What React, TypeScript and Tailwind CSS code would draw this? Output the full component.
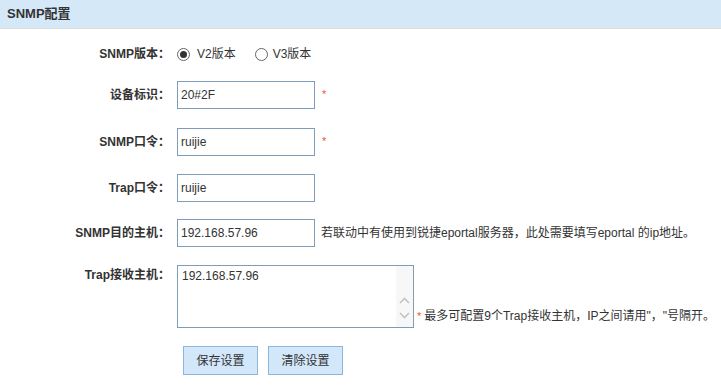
import React from "react";

const font = { fontFamily: '"Liberation Sans", Arial, "Noto Sans CJK SC", sans-serif' };

function Label({ children }: { children: React.ReactNode }) {
  return (
    <div className="w-[170px] shrink-0 text-right font-bold text-[12px] text-[#333]">{children}</div>
  );
}

function Input({ value }: { value: string }) {
  return (
    <div className="w-[138px] h-[28px] border border-[#7f9db9] bg-white flex items-center pl-[3px] text-[12px] text-[#333]">
      {value}
    </div>
  );
}

function Star() {
  return <span className="text-[#f5542d] text-[11px] leading-none">*</span>;
}

function Radio({ checked }: { checked: boolean }) {
  return (
    <span className="w-[13px] h-[13px] rounded-full border border-[#666] bg-white flex items-center justify-center">
      {checked && <span className="w-[7px] h-[7px] rounded-full bg-[#333]" />}
    </span>
  );
}

export default function App() {
  return (
    <div className="w-[721px] h-[389px] bg-white relative overflow-hidden" style={font}>
      <div className="h-[29px] bg-[#d4e8f8] border-b border-[#dcdcdc] flex items-center pl-[7px]">
        <span className="font-bold text-[13px] text-[#333]">SNMP配置</span>
      </div>

      <div className="flex flex-col pt-[17px]">
        <div className="flex items-center h-[16px]">
          <Label>SNMP版本：</Label>
          <div className="flex items-center pl-[7px] text-[12px] text-[#333]">
            <Radio checked />
            <span className="ml-[7px]">V2版本</span>
            <span className="ml-[19px]">
              <Radio checked={false} />
            </span>
            <span className="ml-[5px]">V3版本</span>
          </div>
        </div>

        <div className="flex items-center h-[28px] mt-[19px]">
          <Label>设备标识：</Label>
          <div className="pl-[7px] flex items-center">
            <Input value="20#2F" />
            <span className="ml-[7px] mt-[-4px]"><Star /></span>
          </div>
        </div>

        <div className="flex items-center h-[28px] mt-[19px]">
          <Label>SNMP口令：</Label>
          <div className="pl-[7px] flex items-center">
            <Input value="ruijie" />
            <span className="ml-[7px] mt-[-4px]"><Star /></span>
          </div>
        </div>

        <div className="flex items-center h-[27px] mt-[18px]">
          <Label>Trap口令：</Label>
          <div className="pl-[7px] flex items-center">
            <Input value="ruijie" />
          </div>
        </div>

        <div className="flex items-center h-[28px] mt-[18px]">
          <Label>SNMP目的主机：</Label>
          <div className="pl-[7px] flex items-center">
            <Input value="192.168.57.96" />
            <span className="ml-[6px] text-[12px] text-[#333]">
              若联动中有使用到锐捷eportal服务器，此处需要填写eportal 的ip地址。
            </span>
          </div>
        </div>

        <div className="flex items-start mt-[18px]">
          <div className="pt-[1px]">
            <Label>Trap接收主机：</Label>
          </div>
          <div className="pl-[7px] flex items-end">
            <div className="w-[237px] h-[63px] border border-[#7f9db9] bg-white flex">
              <div className="flex-1 pl-[4px] pt-[1px] text-[12px] text-[#333]">192.168.57.96</div>
              <div className="w-[17px] bg-[#f7f7f7] flex flex-col items-center justify-end pb-[8px] gap-[8px]">
                <svg width="11" height="7" viewBox="0 0 11 7">
                  <path d="M1 6 L5.5 1.5 L10 6" fill="none" stroke="#c4c4c4" strokeWidth="1.6" />
                </svg>
                <svg width="11" height="7" viewBox="0 0 11 7">
                  <path d="M1 1 L5.5 5.5 L10 1" fill="none" stroke="#c4c4c4" strokeWidth="1.6" />
                </svg>
              </div>
            </div>
            <span className="ml-[3px] mb-[3px] text-[12px] text-[#333] flex items-center">
              <Star />
              <span className="ml-[3px]">最多可配置9个Trap接收主机，IP之间请用"，"号隔开。</span>
            </span>
          </div>
        </div>

        <div className="flex mt-[18px] pl-[183px] gap-[10px]">
          <div className="w-[75px] h-[29px] bg-[#d3e7fb] border border-[#8fb5dc] flex items-center justify-center text-[12px] text-[#333]">
            保存设置
          </div>
          <div className="w-[75px] h-[29px] bg-[#d3e7fb] border border-[#8fb5dc] flex items-center justify-center text-[12px] text-[#333]">
            清除设置
          </div>
        </div>
      </div>
    </div>
  );
}
